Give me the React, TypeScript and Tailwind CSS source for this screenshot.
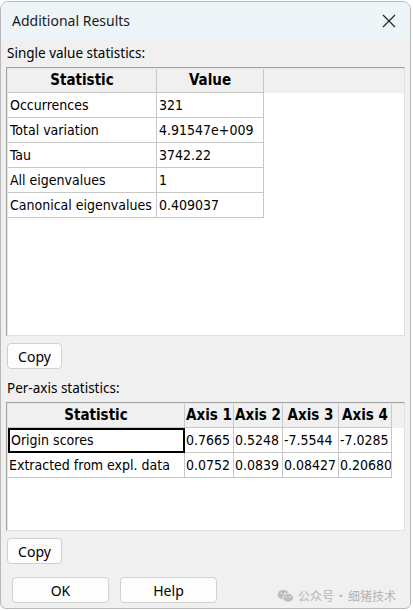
import React from 'react';

const tableFont = { fontFamily: '"DejaVu Sans Condensed", "DejaVu Sans", sans-serif' };

const singleRows = [
  ['Occurrences', '321'],
  ['Total variation', '4.91547e+009'],
  ['Tau', '3742.22'],
  ['All eigenvalues', '1'],
  ['Canonical eigenvalues', '0.409037'],
];

const axisRows = [
  ['Origin scores', '0.7665', '0.5248', '-7.5544', '-7.0285'],
  ['Extracted from expl. data', '0.0752', '0.0839', '0.08427', '0.20680'],
];

const axisWidths = ['w-[177px]', 'w-[49px]', 'w-[49px]', 'w-[56px]', 'w-[53px]'];

function WinButton({ label, w }: { label: string; w: string }) {
  return (
    <button
      className={`${w} h-[26px] rounded-[4px] border border-[#d0d0d0] bg-[#fdfdfd] text-[14px] text-black`}
      style={{ fontFamily: '"Noto Sans", sans-serif' }}
    >
      {label}
    </button>
  );
}

export default function App() {
  return (
    <div className="w-[413px] h-[611px] bg-white pt-[1px] overflow-hidden">
      <div
        className="w-[411px] h-[608px] rounded-t-[8px] rounded-b-[6px] border border-[#b8b8b8] bg-[#f0f0f0] overflow-hidden flex flex-col"
        style={{ fontFamily: '"Noto Sans", sans-serif' }}
      >
        {/* title bar */}
        <div className="h-[37px] shrink-0 bg-[#eef5f8] flex items-center justify-between pl-[11px] pr-[14px]">
          <span className="text-[14px] text-[#1a1a1a]">Additional Results</span>
          <svg width="14" height="14" viewBox="0 0 14 14" className="text-[#222]">
            <path d="M1 1 L13 13 M13 1 L1 13" stroke="currentColor" strokeWidth="1.2" />
          </svg>
        </div>

        <div className="px-[5px] flex flex-col">
          <div className="text-[13.5px] text-black h-[28px] flex items-center pl-[1px]">Single value statistics:</div>

          <div className="h-[269px] bg-white border border-[#a0a0a0] border-r-[#e0e0e0] border-b-[#e0e0e0] overflow-hidden" style={tableFont}>
            <div className="border-t border-l border-[#e8e8e8] h-full">
              <div className="flex h-[24px] bg-[#f0f0f0]">
                <div className="w-[149px] border-r border-b border-[#c8c8c8] flex items-center justify-center font-bold text-[15px] text-black">Statistic</div>
                <div className="w-[107px] border-r border-b border-[#c8c8c8] flex items-center justify-center font-bold text-[15px] text-black">Value</div>
                <div className="flex-1" />
              </div>
              {singleRows.map(([a, b]) => (
                <div key={a} className="flex h-[25px]">
                  <div className="w-[149px] border-r border-b border-[#c8c8c8] flex items-center pl-[2px] text-[14px] text-black">{a}</div>
                  <div className="w-[107px] border-r border-b border-[#c8c8c8] flex items-center pl-[2px] text-[14px] text-black">{b}</div>
                </div>
              ))}
            </div>
          </div>

          <div className="mt-[7px] pl-[1px]">
            <WinButton label="Copy" w="w-[55px]" />
          </div>

          <div className="text-[13.5px] text-black h-[27px] mt-[6px] flex items-center pl-[1px]">Per-axis statistics:</div>

          <div className="h-[129px] bg-white border border-[#a0a0a0] border-r-[#e0e0e0] border-b-[#e0e0e0] overflow-hidden" style={tableFont}>
            <div className="border-t border-l border-[#e8e8e8] h-full">
              <div className="flex h-[24px] bg-[#f0f0f0]">
                {['Statistic', 'Axis 1', 'Axis 2', 'Axis 3', 'Axis 4'].map((t, i) => (
                  <div key={t} className={`${axisWidths[i]} border-r border-b border-[#c8c8c8] flex items-center justify-center font-bold text-[15px] text-black whitespace-nowrap overflow-hidden`}>{t}</div>
                ))}
                <div className="flex-1" />
              </div>
              {axisRows.map((r, ri) => (
                <div key={r[0]} className="flex h-[25px]">
                  {r.map((c, ci) => {
                    const focus = ri === 0 && ci === 0;
                    return (
                      <div
                        key={ci}
                        className={`${axisWidths[ci]} ${focus ? 'border-2 border-black' : 'border-r border-b border-[#c8c8c8]'} flex items-center pl-[1px] text-[14px] text-black whitespace-nowrap overflow-hidden`}
                      >
                        {c}
                      </div>
                    );
                  })}
                </div>
              ))}
            </div>
          </div>

          <div className="mt-[7px] pl-[1px]">
            <WinButton label="Copy" w="w-[55px]" />
          </div>

          <div className="mt-[11px] flex items-center pl-[6px]">
            <WinButton label="OK" w="w-[97px]" />
            <div className="w-[11px]" />
            <WinButton label="Help" w="w-[97px]" />
            <div className="ml-auto mr-[9px] flex items-center gap-[4px] text-[#b4b4b4] text-[12px] mt-[12px]" style={{ fontFamily: '"Noto Sans CJK SC", sans-serif' }}>
              <svg width="17" height="14" viewBox="0 0 19 16">
                <ellipse cx="7" cy="6.5" rx="6.5" ry="5.5" fill="#bcbcbc" />
                <ellipse cx="12.5" cy="10" rx="6" ry="5" fill="#bcbcbc" stroke="#f0f0f0" strokeWidth="1" />
                <circle cx="10.5" cy="9" r="0.9" fill="#f0f0f0" />
                <circle cx="14.5" cy="9" r="0.9" fill="#f0f0f0" />
                <circle cx="4.8" cy="5" r="0.9" fill="#f0f0f0" />
                <circle cx="8.6" cy="5" r="0.9" fill="#f0f0f0" />
              </svg>
              <span>公众号<span className="mx-[1px]">·</span>细猪技术</span>
            </div>
          </div>
        </div>
      </div>
    </div>
  );
}
